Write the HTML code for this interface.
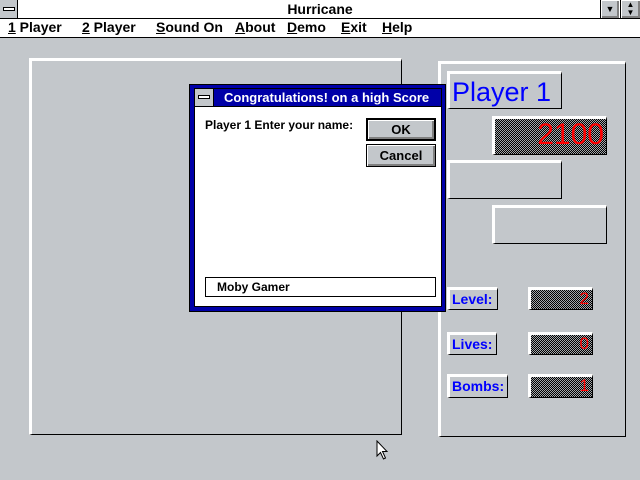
<!DOCTYPE html>
<html><head><meta charset="utf-8"><style>
*{margin:0;padding:0;box-sizing:border-box}
body{width:640px;height:480px;background:#c3c7cb;position:relative;overflow:hidden;font-family:"Liberation Sans",sans-serif;font-weight:bold;font-size:13px}
.a{position:absolute}
.tb{left:0;top:0;width:640px;height:19px;background:#fff;border-bottom:1px solid #000;text-align:center;line-height:18px;font-size:14px}
.menu{left:0;top:19px;width:640px;height:19px;background:#fff;border-bottom:1px solid #000;font-size:14px;line-height:17px}
.menu span{position:absolute;top:0}
.box{border-top:3px solid #fff;border-left:3px solid #fff;border-right:1px solid #000;border-bottom:1px solid #000}
.chk{background:repeating-conic-gradient(#000 0 25%,#a3a7ab 0 50%) 0 0/2px 2px;color:#f00;text-align:right;font-weight:normal}
.lbl{color:#00f;font-size:14px;line-height:18px;padding-left:2px}
.btn{background:#c3c7cb;text-align:center;border:1px solid #000;box-shadow:inset 1px 1px #fff,inset -2px -2px #808080}
</style></head><body>
<div class="a tb">Hurricane</div>
<div class="a" style="left:0;top:0;width:18px;height:19px;border-right:1px solid #000;border-bottom:1px solid #000;background:#c3c7cb"><div class="a" style="left:3px;top:7px;width:12px;height:4px;border:1px solid #000;background:#fff"></div></div>
<div class="a" style="left:600px;top:0;width:19px;height:18px;background:#c3c7cb;border-left:1px solid #000;box-shadow:inset 1px 1px #fff,inset -2px -2px #808080;text-align:center;font-size:9px;line-height:18px">▼</div>
<div class="a" style="left:620px;top:0;width:20px;height:18px;background:#c3c7cb;border-left:1px solid #000;box-shadow:inset 1px 1px #fff,inset -2px -2px #808080;text-align:center;font-size:8px;line-height:8px;padding-top:1px">▲<br>▼</div>
<div class="a menu">
<span style="left:8px"><u>1</u> Player</span><span style="left:82px"><u>2</u> Player</span><span style="left:156px"><u>S</u>ound On</span><span style="left:235px"><u>A</u>bout</span><span style="left:287px"><u>D</u>emo</span><span style="left:341px"><u>E</u>xit</span><span style="left:382px"><u>H</u>elp</span>
</div>
<div class="a box" style="left:29px;top:58px;width:373px;height:377px"></div>
<div class="a box" style="left:438px;top:61px;width:188px;height:376px"></div>
<div class="a box" style="left:447px;top:71px;width:115px;height:38px;color:#00f;font-size:27px;font-weight:normal;line-height:36px;padding-left:2px">Player 1</div>
<div class="a box" style="left:492px;top:116px;width:115px;height:39px;padding:0 0 0 0"><div class="chk" style="width:100%;height:100%;font-size:30px;line-height:32px;padding-right:2px">2100</div></div>
<div class="a box" style="left:447px;top:160px;width:115px;height:39px"></div>
<div class="a box" style="left:492px;top:205px;width:115px;height:39px"></div>
<div class="a box lbl" style="left:447px;top:287px;width:51px;height:23px">Level:</div>
<div class="a box lbl" style="left:447px;top:332px;width:50px;height:23px">Lives:</div>
<div class="a box lbl" style="left:447px;top:374px;width:61px;height:24px">Bombs:</div>
<div class="a box" style="left:528px;top:287px;width:65px;height:23px"><div class="chk" style="height:100%;font-size:17px;line-height:18px;padding-right:3px">2</div></div>
<div class="a box" style="left:528px;top:332px;width:65px;height:23px"><div class="chk" style="height:100%;font-size:17px;line-height:18px;padding-right:3px">0</div></div>
<div class="a box" style="left:528px;top:374px;width:65px;height:24px"><div class="chk" style="height:100%;font-size:17px;line-height:18px;padding-right:3px">1</div></div>
<!-- dialog -->
<div class="a" style="left:189px;top:84px;width:257px;height:228px;background:#0000a8;border:1px solid #000"></div>
<div class="a" style="left:194px;top:88px;width:248px;height:219px;background:#fff;border:1px solid #000"></div>
<div class="a" style="left:194px;top:88px;width:248px;height:19px;background:#0000a8;border:1px solid #000;color:#fff;font-size:13px;line-height:17px;padding-left:29px">Congratulations! on a high Score</div>
<div class="a" style="left:194px;top:88px;width:20px;height:19px;background:#c3c7cb;border:1px solid #000"><div class="a" style="left:3px;top:6px;width:12px;height:4px;border:1px solid #000;background:#fff"></div></div>
<div class="a" style="left:205px;top:118px;font-size:12px">Player 1 Enter your name:</div>
<div class="a btn" style="left:366px;top:118px;width:70px;height:23px;border-width:2px;line-height:19px">OK</div>
<div class="a btn" style="left:366px;top:144px;width:70px;height:23px;line-height:21px">Cancel</div>
<div class="a" style="left:205px;top:277px;width:231px;height:20px;border:1px solid #000;font-size:12px;line-height:18px;padding-left:11px">Moby Gamer</div>
<svg class="a" style="left:376px;top:440px" width="14" height="22" viewBox="0 0 14 22"><path d="M1 1 L1 16 L4.5 12.5 L7.5 19 L9.5 18 L6.5 11.5 L11 11.5 Z" fill="#fff" stroke="#000" stroke-width="1"/></svg>
</body></html>
